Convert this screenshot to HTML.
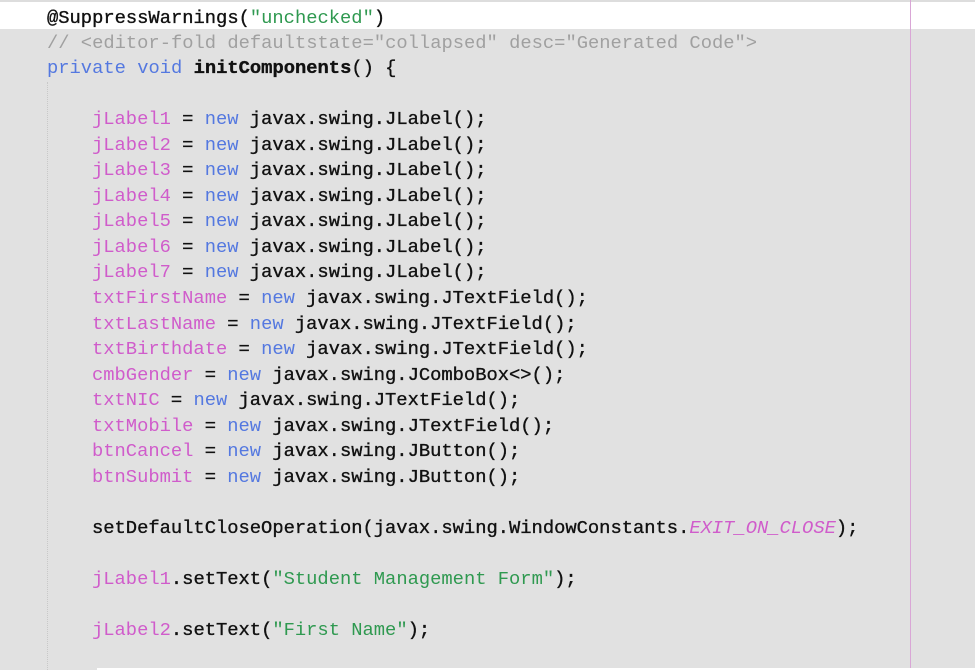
<!DOCTYPE html>
<html><head><style>
html,body{margin:0;padding:0}
body{width:975px;height:670px;position:relative;overflow:hidden;background:#e1e1e1;font-family:"Liberation Mono",monospace;font-size:18.8px}
.top{position:absolute;left:0;top:0;width:975px;height:29px;background:#fff;border-top:2px solid #ddd;box-sizing:border-box}
.vl{position:absolute;left:910px;top:0;height:670px;width:1px;background:#d9a6d6}
.dot{position:absolute;left:47px;top:82px;height:588px;border-left:1px dotted #c8c8c8}
.ln{position:absolute;white-space:pre;color:#111;font-weight:normal;line-height:20px;-webkit-text-stroke:0.35px #111}
.p{color:#d05ccb;-webkit-text-stroke:0}
.b{color:#5478e0;-webkit-text-stroke:0}
.g{color:#2f9950;-webkit-text-stroke:0}
.c{color:#a0a0a0;-webkit-text-stroke:0}
.i{color:#d05ccb;font-style:italic;-webkit-text-stroke:0}
.bot{position:absolute;left:97px;top:668px;width:880px;height:2px;background:#fff}
</style></head><body>
<div class="top"></div>
<div class="vl"></div>
<div class="dot"></div>
<div class="bot"></div>
<div class="ln" style="left:47px;top:8px">@SuppressWarnings(<span class="g">"unchecked"</span>)</div>
<div class="ln" style="left:47px;top:33px"><span class="c">// &lt;editor-fold defaultstate="collapsed" desc="Generated Code"&gt;</span></div>
<div class="ln" style="left:47px;top:58px"><span class="b">private</span> <span class="b">void</span> <b>initComponents</b>() {</div>
<div class="ln" style="left:92px;top:109px"><span class="p">jLabel1</span> = <span class="b">new</span> javax.swing.JLabel();</div>
<div class="ln" style="left:92px;top:135px"><span class="p">jLabel2</span> = <span class="b">new</span> javax.swing.JLabel();</div>
<div class="ln" style="left:92px;top:160px"><span class="p">jLabel3</span> = <span class="b">new</span> javax.swing.JLabel();</div>
<div class="ln" style="left:92px;top:186px"><span class="p">jLabel4</span> = <span class="b">new</span> javax.swing.JLabel();</div>
<div class="ln" style="left:92px;top:211px"><span class="p">jLabel5</span> = <span class="b">new</span> javax.swing.JLabel();</div>
<div class="ln" style="left:92px;top:237px"><span class="p">jLabel6</span> = <span class="b">new</span> javax.swing.JLabel();</div>
<div class="ln" style="left:92px;top:262px"><span class="p">jLabel7</span> = <span class="b">new</span> javax.swing.JLabel();</div>
<div class="ln" style="left:92px;top:288px"><span class="p">txtFirstName</span> = <span class="b">new</span> javax.swing.JTextField();</div>
<div class="ln" style="left:92px;top:314px"><span class="p">txtLastName</span> = <span class="b">new</span> javax.swing.JTextField();</div>
<div class="ln" style="left:92px;top:339px"><span class="p">txtBirthdate</span> = <span class="b">new</span> javax.swing.JTextField();</div>
<div class="ln" style="left:92px;top:365px"><span class="p">cmbGender</span> = <span class="b">new</span> javax.swing.JComboBox&lt;&gt;();</div>
<div class="ln" style="left:92px;top:390px"><span class="p">txtNIC</span> = <span class="b">new</span> javax.swing.JTextField();</div>
<div class="ln" style="left:92px;top:416px"><span class="p">txtMobile</span> = <span class="b">new</span> javax.swing.JTextField();</div>
<div class="ln" style="left:92px;top:441px"><span class="p">btnCancel</span> = <span class="b">new</span> javax.swing.JButton();</div>
<div class="ln" style="left:92px;top:467px"><span class="p">btnSubmit</span> = <span class="b">new</span> javax.swing.JButton();</div>
<div class="ln" style="left:92px;top:518px">setDefaultCloseOperation(javax.swing.WindowConstants.<span class="i">EXIT_ON_CLOSE</span>);</div>
<div class="ln" style="left:92px;top:569px"><span class="p">jLabel1</span>.setText(<span class="g">"Student Management Form"</span>);</div>
<div class="ln" style="left:92px;top:620px"><span class="p">jLabel2</span>.setText(<span class="g">"First Name"</span>);</div>
</body></html>
